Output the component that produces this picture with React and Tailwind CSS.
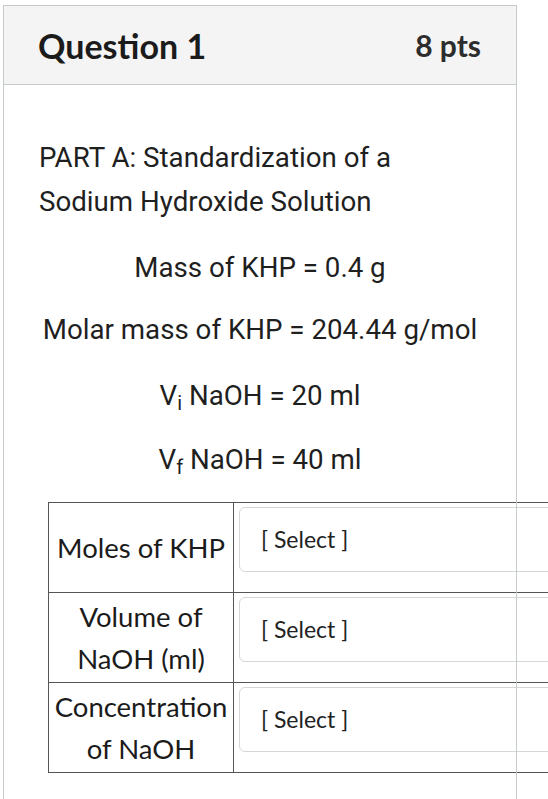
import React from "react";

function SelectBox() {
  return (
    <div className="mt-[4px] h-[65px] w-[340px] rounded-[6px] border border-[#d3d7da] flex items-center pl-[21px] text-[23px] text-[#222]">
      [ Select ]
    </div>
  );
}

export default function App() {
  const lato = { fontFamily: "Lato, 'Liberation Sans', sans-serif" };
  const roboto = { fontFamily: "Roboto, 'Liberation Sans', sans-serif" };
  return (
    <div className="w-[548px] h-[799px] overflow-hidden bg-white pt-[5px] pl-[3px]">
      <div className="relative w-[514px] min-h-[900px] border border-[#c4c9cc]">
        <div
          className="h-[79px] bg-[#f4f4f4] border-b border-[#c4c9cc] flex items-center justify-between pl-[34px] pr-[35px]"
          style={lato}
        >
          <span className="text-[34px] font-bold text-[#1b1b1b]">Question 1</span>
          <span className="text-[30px] font-bold text-[#2d2d2d]">8 pts</span>
        </div>
        <div className="pt-[51px] text-[27.7px] text-[#1f1f1f]" style={roboto}>
          <p className="pl-[35px] leading-[44px]">
            PART A: Standardization of a
            <br />
            Sodium Hydroxide Solution
          </p>
          <p className="text-center leading-[44px] mt-[22px]">Mass of KHP = 0.4 g</p>
          <p className="text-center leading-[44px] mt-[18px]">Molar mass of KHP = 204.44 g/mol</p>
          <p className="text-center leading-[44px] mt-[22px]">
            V<sub className="text-[20px]">i</sub> NaOH = 20 ml
          </p>
          <p className="text-center leading-[44px] mt-[20px]">
            V<sub className="text-[20px]">f</sub> NaOH = 40 ml
          </p>
          <div className="mt-[20px] pl-[44px]" style={lato}>
            <table className="border-collapse w-[560px] text-[27.5px] text-[#1b1b1b]">
              <tbody>
                <tr className="h-[90px]">
                  <td className="w-[185px] border border-[#555] text-center leading-[42px] align-middle whitespace-nowrap">
                    Moles of KHP
                  </td>
                  <td className="border border-[#555] pl-[5px] align-top">
                    <SelectBox />
                  </td>
                </tr>
                <tr className="h-[90px]">
                  <td className="w-[185px] border border-[#555] text-center leading-[42px] align-middle whitespace-nowrap">
                    Volume of
                    <br />
                    NaOH (ml)
                  </td>
                  <td className="border border-[#555] pl-[5px] align-top">
                    <SelectBox />
                  </td>
                </tr>
                <tr className="h-[90px]">
                  <td className="w-[185px] border border-[#555] text-center leading-[42px] align-middle whitespace-nowrap">
                    Concentration
                    <br />
                    of NaOH
                  </td>
                  <td className="border border-[#555] pl-[5px] align-top">
                    <SelectBox />
                  </td>
                </tr>
              </tbody>
            </table>
          </div>
        </div>
        <div className="absolute top-0 bottom-0 right-[-1px] w-px bg-[#c4c9cc] pointer-events-none" />
      </div>
    </div>
  );
}
